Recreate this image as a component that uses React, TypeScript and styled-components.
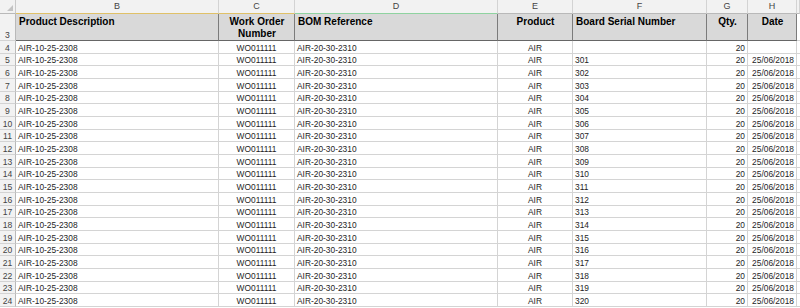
import styled, { createGlobalStyle } from "styled-components";

const GlobalStyle = createGlobalStyle`
  html, body {
    margin: 0;
    padding: 0;
    background: #fff;
    overflow: hidden;
  }
  body {
    font-family: "Liberation Sans", Arial, sans-serif;
  }
`;

const COLS = "16px 203px 76px 203px 75px 134px 41px 49px 1fr";

const Sheet = styled.div`
  width: 800px;
  height: 308px;
  overflow: hidden;
  background: #fff;
`;

const Row = styled.div<{ $h: number }>`
  display: grid;
  grid-template-columns: ${COLS};
  height: ${(p) => p.$h}px;
`;

const Corner = styled.div`
  position: relative;
  background: #f2f2f2;
  border-right: 1px solid #c9c9c9;
  border-bottom: 1px solid #b9b9b9;
  box-sizing: border-box;
  &::after {
    content: "";
    position: absolute;
    right: 2px;
    bottom: 2px;
    width: 0;
    height: 0;
    border-left: 6px solid transparent;
    border-bottom: 6px solid #c3c3c3;
  }
`;

const ColLetter = styled.div<{ $mark?: "gold" | "green" }>`
  box-sizing: border-box;
  background: #f2f2f2;
  border-right: 1px solid #d3d3d3;
  border-bottom: 1px solid
    ${(p) =>
      p.$mark === "gold" ? "#e0c168" : p.$mark === "green" ? "#8fd3a0" : "#b9b9b9"};
  color: #444;
  font-size: 9px;
  line-height: 13px;
  text-align: center;
`;

const RowNum = styled.div`
  box-sizing: border-box;
  background: #f2f2f2;
  border-right: 1px solid #b9b9b9;
  border-bottom: 1px solid #d3d3d3;
  color: #444;
  font-size: 8.6px;
  line-height: 8px;
  display: flex;
  align-items: flex-end;
  justify-content: center;
  padding-bottom: 1px;
`;

const HeadCell = styled.div<{ $align?: string }>`
  box-sizing: border-box;
  background: #d9d9d9;
  border-right: 1px solid #7c7c7c;
  border-bottom: 1px solid #666;
  color: #000;
  font-weight: 700;
  font-size: 10px;
  line-height: 12px;
  padding: 2px 2px 0 3px;
  text-align: ${(p) => p.$align || "left"};
  white-space: normal;
`;

const Blank = styled.div`
  box-sizing: border-box;
  background: #fff;
  border-bottom: 1px solid #d4d4d4;
`;

const Cell = styled.div<{ $align?: "left" | "center" | "right" }>`
  box-sizing: border-box;
  border-right: 1px solid #d4d4d4;
  border-bottom: 1px solid #d4d4d4;
  color: #1e1e1e;
  font-size: 8.4px;
  line-height: 8px;
  white-space: nowrap;
  overflow: hidden;
  display: flex;
  align-items: flex-end;
  justify-content: ${(p) =>
    p.$align === "center" ? "center" : p.$align === "right" ? "flex-end" : "flex-start"};
  padding: 0 2px 1px 2px;
`;

const letters: { l: string; mark?: "gold" | "green" }[] = [
  { l: "B", mark: "gold" },
  { l: "C", mark: "gold" },
  { l: "D", mark: "green" },
  { l: "E" },
  { l: "F" },
  { l: "G" },
  { l: "H" },
];

const rows = Array.from({ length: 21 }, (_, i) => ({
  num: i + 4,
  serial: i === 0 ? "" : String(300 + i),
  date: i === 0 ? "" : "25/06/2018",
}));

const rowHeight = (i: number) =>
  Math.round(((i + 1) * 266) / 21) - Math.round((i * 266) / 21);

export default function App() {
  return (
    <Sheet>
      <GlobalStyle />
      <Row $h={14}>
        <Corner />
        {letters.map((c) => (
          <ColLetter key={c.l} $mark={c.mark}>
            {c.l}
          </ColLetter>
        ))}
        <ColLetter />
      </Row>
      <Row $h={27}>
        <RowNum>3</RowNum>
        <HeadCell>Product Description</HeadCell>
        <HeadCell $align="center">Work Order Number</HeadCell>
        <HeadCell>BOM Reference</HeadCell>
        <HeadCell $align="center">Product</HeadCell>
        <HeadCell>Board Serial Number</HeadCell>
        <HeadCell $align="center">Qty.</HeadCell>
        <HeadCell $align="center">Date</HeadCell>
        <Blank />
      </Row>
      {rows.map((r, i) => (
        <Row key={r.num} $h={rowHeight(i)}>
          <RowNum>{r.num}</RowNum>
          <Cell>AIR-10-25-2308</Cell>
          <Cell $align="center">WO011111</Cell>
          <Cell>AIR-20-30-2310</Cell>
          <Cell $align="center">AIR</Cell>
          <Cell>{r.serial}</Cell>
          <Cell $align="right">20</Cell>
          <Cell $align="right">{r.date}</Cell>
          <Cell />
        </Row>
      ))}
    </Sheet>
  );
}
